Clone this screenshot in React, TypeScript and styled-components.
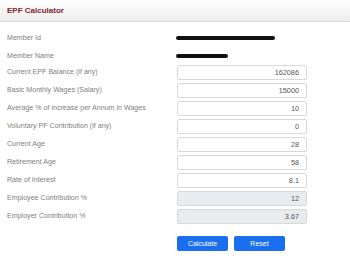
import React from 'react'
import styled, { createGlobalStyle } from 'styled-components'

const GlobalStyle = createGlobalStyle`
  html, body {
    margin: 0;
    padding: 0;
    background: #fff;
    font-family: "Liberation Sans", Arial, sans-serif;
  }
`

const Panel = styled.div`
  width: 350px;
  height: 259px;
  background: #fff;
  overflow: hidden;
`

const Header = styled.div`
  height: 21px;
  display: flex;
  align-items: center;
  padding-left: 7px;
  background: linear-gradient(to bottom, #ffffff, #ececec);
  border-bottom: 1px solid #dcdcdc;
`

const Title = styled.span`
  color: #7c2630;
  font-size: 8px;
  font-weight: 700;
`

const Body = styled.div`
  padding: 7px 0 0 7px;
`

const Row = styled.div<{ $plain?: boolean }>`
  display: grid;
  grid-template-columns: 170px 130px;
  height: 18px;
  align-items: ${p => (p.$plain ? 'center' : 'start')};
`

const Label = styled.span`
  color: #808080;
  font-size: 7.1px;
  line-height: 15px;
`

const Redacted = styled.span<{ $w: number }>`
  display: block;
  width: ${p => p.$w}px;
  height: 4px;
  border-radius: 2px;
  background: #111;
  margin-left: -1px;
`

const Field = styled.input`
  box-sizing: border-box;
  width: 130px;
  height: 15px;
  margin: 0;
  padding: 0 7px 0 4px;
  border: 1px solid #d9d9d9;
  border-radius: 2px;
  background: ${p => (p.disabled ? '#e9ecef' : '#fff')};
  color: #555;
  font-family: "Liberation Sans", Arial, sans-serif;
  font-size: 7.3px;
  text-align: right;
  outline: none;
`

const Actions = styled.div`
  display: flex;
  gap: 6px;
  margin: 9px 0 0 170px;
`

const Button = styled.button`
  width: 51px;
  height: 15px;
  padding: 0;
  border: none;
  border-radius: 2px;
  background: #1a6ff0;
  color: #fff;
  font-family: "Liberation Sans", Arial, sans-serif;
  font-size: 7px;
`

const fields = [
  { label: 'Current EPF Balance (if any)', value: '162086' },
  { label: 'Basic Monthly Wages (Salary)', value: '15000' },
  { label: 'Average % of increase per Annum in Wages', value: '10' },
  { label: 'Voluntary PF Contribution (if any)', value: '0' },
  { label: 'Current Age', value: '28' },
  { label: 'Retirement Age', value: '58' },
  { label: 'Rate of Interest', value: '8.1' },
  { label: 'Employee Contribution %', value: '12', disabled: true },
  { label: 'Employer Contribution %', value: '3.67', disabled: true },
]

export default function App() {
  return (
    <Panel>
      <GlobalStyle />
      <Header>
        <Title>EPF Calculator</Title>
      </Header>
      <Body>
        <Row $plain>
          <Label>Member Id</Label>
          <Redacted $w={99} />
        </Row>
        <Row $plain>
          <Label>Member Name</Label>
          <Redacted $w={52} />
        </Row>
        {fields.map(f => (
          <Row key={f.label}>
            <Label>{f.label}</Label>
            <Field defaultValue={f.value} disabled={f.disabled} />
          </Row>
        ))}
        <Actions>
          <Button>Calculate</Button>
          <Button>Reset</Button>
        </Actions>
      </Body>
    </Panel>
  )
}
